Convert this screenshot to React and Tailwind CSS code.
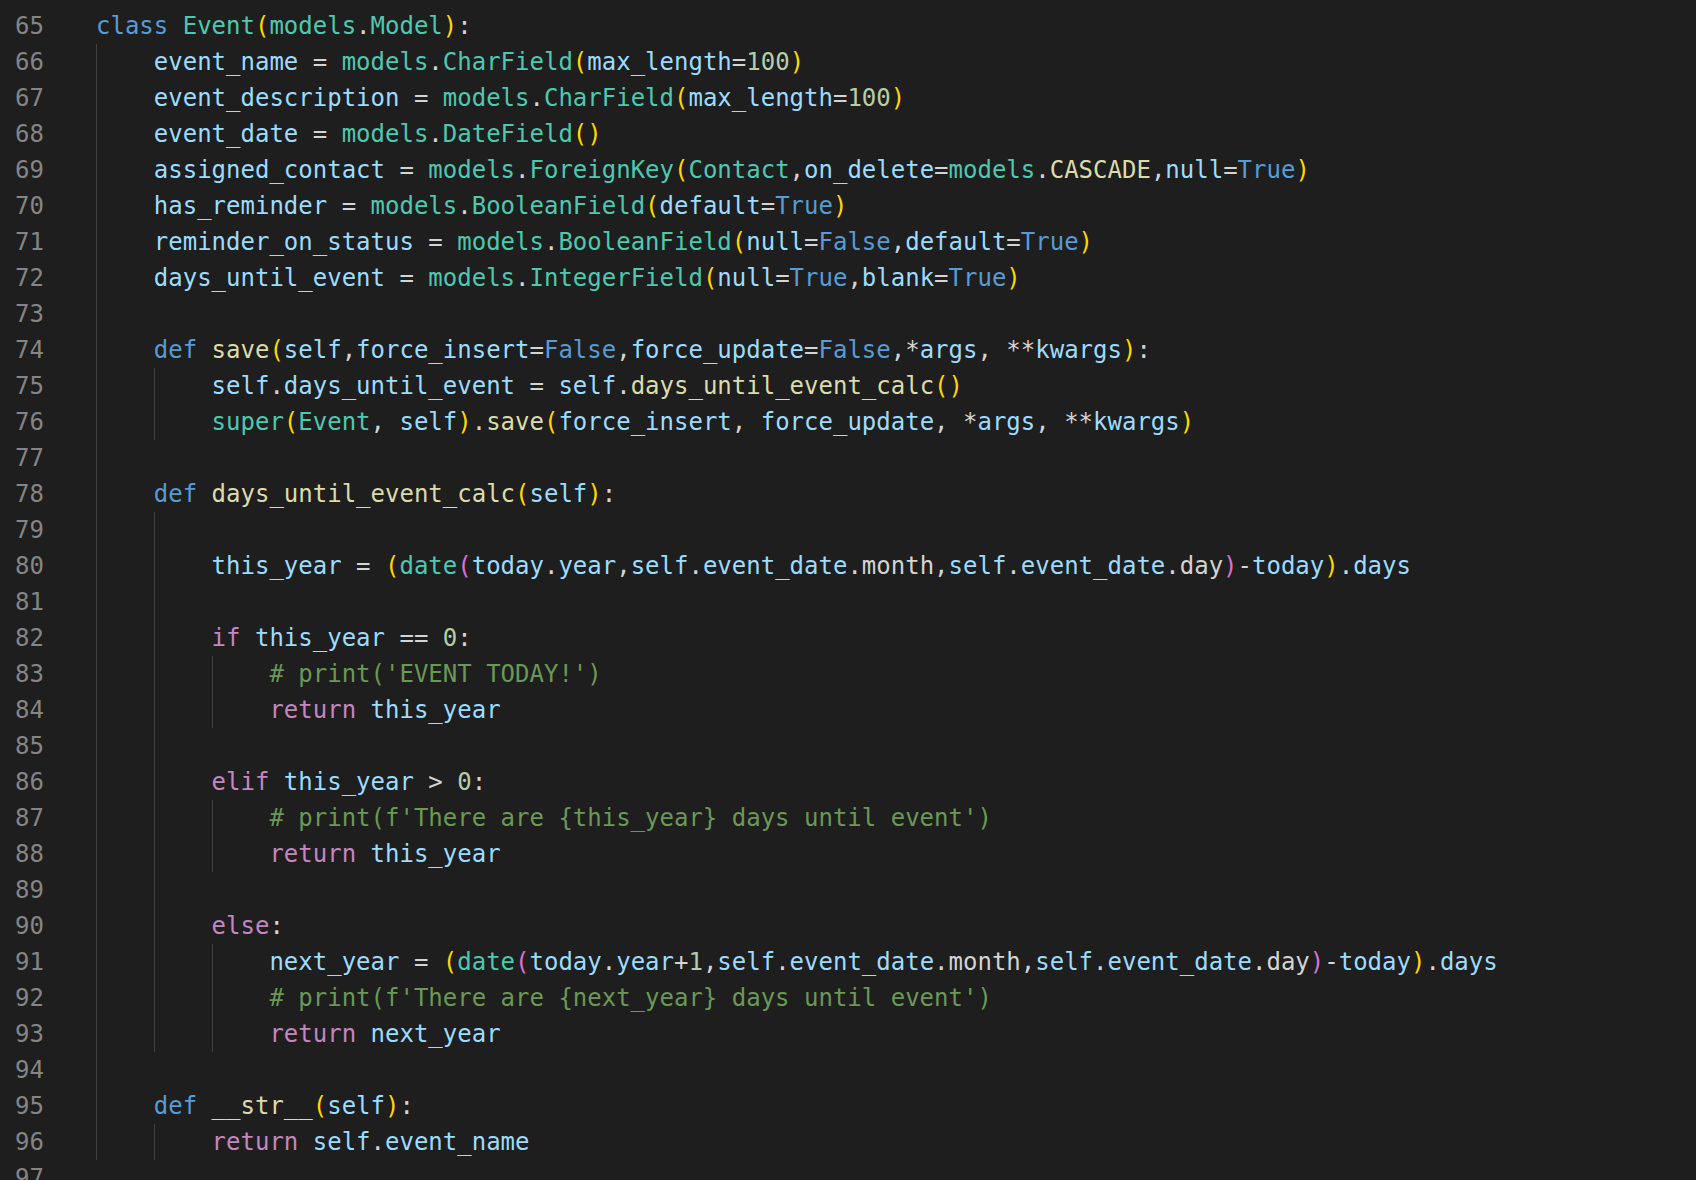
const tone = {
  v: 'text-[#9cdcfe]',
  t: 'text-[#4ec9b0]',
  k: 'text-[#569cd6]',
  c: 'text-[#c586c0]',
  f: 'text-[#dcdcaa]',
  n: 'text-[#b5cea8]',
  m: 'text-[#6a9955]',
  w: 'text-[#d4d4d4]',
  y: 'text-[#ffd700]',
  p: 'text-[#da70d6]',
}

// [line number, indent level, tokens as [tone, text]]
const lines = [
  [65, 0, [['k', 'class'], ['w', ' '], ['t', 'Event'], ['y', '('], ['t', 'models'], ['w', '.'], ['t', 'Model'], ['y', ')'], ['w', ':']]],
  [66, 1, [['v', 'event_name'], ['w', ' = '], ['t', 'models'], ['w', '.'], ['t', 'CharField'], ['y', '('], ['v', 'max_length'], ['w', '='], ['n', '100'], ['y', ')']]],
  [67, 1, [['v', 'event_description'], ['w', ' = '], ['t', 'models'], ['w', '.'], ['t', 'CharField'], ['y', '('], ['v', 'max_length'], ['w', '='], ['n', '100'], ['y', ')']]],
  [68, 1, [['v', 'event_date'], ['w', ' = '], ['t', 'models'], ['w', '.'], ['t', 'DateField'], ['y', '()']]],
  [69, 1, [['v', 'assigned_contact'], ['w', ' = '], ['t', 'models'], ['w', '.'], ['t', 'ForeignKey'], ['y', '('], ['t', 'Contact'], ['w', ','], ['v', 'on_delete'], ['w', '='], ['t', 'models'], ['w', '.'], ['f', 'CASCADE'], ['w', ','], ['v', 'null'], ['w', '='], ['k', 'True'], ['y', ')']]],
  [70, 1, [['v', 'has_reminder'], ['w', ' = '], ['t', 'models'], ['w', '.'], ['t', 'BooleanField'], ['y', '('], ['v', 'default'], ['w', '='], ['k', 'True'], ['y', ')']]],
  [71, 1, [['v', 'reminder_on_status'], ['w', ' = '], ['t', 'models'], ['w', '.'], ['t', 'BooleanField'], ['y', '('], ['v', 'null'], ['w', '='], ['k', 'False'], ['w', ','], ['v', 'default'], ['w', '='], ['k', 'True'], ['y', ')']]],
  [72, 1, [['v', 'days_until_event'], ['w', ' = '], ['t', 'models'], ['w', '.'], ['t', 'IntegerField'], ['y', '('], ['v', 'null'], ['w', '='], ['k', 'True'], ['w', ','], ['v', 'blank'], ['w', '='], ['k', 'True'], ['y', ')']]],
  [73, 1, []],
  [74, 1, [['k', 'def'], ['w', ' '], ['f', 'save'], ['y', '('], ['v', 'self'], ['w', ','], ['v', 'force_insert'], ['w', '='], ['k', 'False'], ['w', ','], ['v', 'force_update'], ['w', '='], ['k', 'False'], ['w', ',*'], ['v', 'args'], ['w', ', **'], ['v', 'kwargs'], ['y', ')'], ['w', ':']]],
  [75, 2, [['v', 'self'], ['w', '.'], ['v', 'days_until_event'], ['w', ' = '], ['v', 'self'], ['w', '.'], ['f', 'days_until_event_calc'], ['y', '()']]],
  [76, 2, [['t', 'super'], ['y', '('], ['t', 'Event'], ['w', ', '], ['v', 'self'], ['y', ')'], ['w', '.'], ['f', 'save'], ['y', '('], ['v', 'force_insert'], ['w', ', '], ['v', 'force_update'], ['w', ', *'], ['v', 'args'], ['w', ', **'], ['v', 'kwargs'], ['y', ')']]],
  [77, 1, []],
  [78, 1, [['k', 'def'], ['w', ' '], ['f', 'days_until_event_calc'], ['y', '('], ['v', 'self'], ['y', ')'], ['w', ':']]],
  [79, 2, []],
  [80, 2, [['v', 'this_year'], ['w', ' = '], ['y', '('], ['t', 'date'], ['p', '('], ['v', 'today'], ['w', '.'], ['v', 'year'], ['w', ','], ['v', 'self'], ['w', '.'], ['v', 'event_date'], ['w', '.month,'], ['v', 'self'], ['w', '.'], ['v', 'event_date'], ['w', '.day'], ['p', ')'], ['w', '-'], ['v', 'today'], ['y', ')'], ['w', '.'], ['v', 'days']]],
  [81, 2, []],
  [82, 2, [['c', 'if'], ['w', ' '], ['v', 'this_year'], ['w', ' == '], ['n', '0'], ['w', ':']]],
  [83, 3, [['m', "# print('EVENT TODAY!')"]]],
  [84, 3, [['c', 'return'], ['w', ' '], ['v', 'this_year']]],
  [85, 2, []],
  [86, 2, [['c', 'elif'], ['w', ' '], ['v', 'this_year'], ['w', ' > '], ['n', '0'], ['w', ':']]],
  [87, 3, [['m', "# print(f'There are {this_year} days until event')"]]],
  [88, 3, [['c', 'return'], ['w', ' '], ['v', 'this_year']]],
  [89, 2, []],
  [90, 2, [['c', 'else'], ['w', ':']]],
  [91, 3, [['v', 'next_year'], ['w', ' = '], ['y', '('], ['t', 'date'], ['p', '('], ['v', 'today'], ['w', '.'], ['v', 'year'], ['w', '+'], ['n', '1'], ['w', ','], ['v', 'self'], ['w', '.'], ['v', 'event_date'], ['w', '.month,'], ['v', 'self'], ['w', '.'], ['v', 'event_date'], ['w', '.day'], ['p', ')'], ['w', '-'], ['v', 'today'], ['y', ')'], ['w', '.'], ['v', 'days']]],
  [92, 3, [['m', "# print(f'There are {next_year} days until event')"]]],
  [93, 3, [['c', 'return'], ['w', ' '], ['v', 'next_year']]],
  [94, 1, []],
  [95, 1, [['k', 'def'], ['w', ' '], ['f', '__str__'], ['y', '('], ['v', 'self'], ['y', ')'], ['w', ':']]],
  [96, 2, [['c', 'return'], ['w', ' '], ['v', 'self'], ['w', '.'], ['v', 'event_name']]],
  [97, 0, []],
]

export default function App() {
  return (
    <div className="h-[1180px] w-full overflow-hidden bg-[#1e1e1e] pt-[8px] font-['DejaVu_Sans_Mono',monospace] text-[24px] leading-[36px]">
      {lines.map(([num, ind, tokens]) => (
        <CodeLine key={num} num={num} ind={ind} tokens={tokens} />
      ))}
    </div>
  )
}

function CodeLine({ num, ind, tokens }) {
  return (
    <div className="flex h-[36px] items-stretch whitespace-pre">
      <span className="w-[44px] shrink-0 text-right text-[#858585]">{num}</span>
      <div className="ml-[52px] flex items-stretch">
        {Array.from({ length: ind }).map((_, i) => (
          <span key={i} className="w-[4ch] shrink-0 border-l border-[#404040]" />
        ))}
        <span>
          {tokens.map(([c, text], i) => (
            <span key={i} className={tone[c]}>
              {text}
            </span>
          ))}
        </span>
      </div>
    </div>
  )
}
